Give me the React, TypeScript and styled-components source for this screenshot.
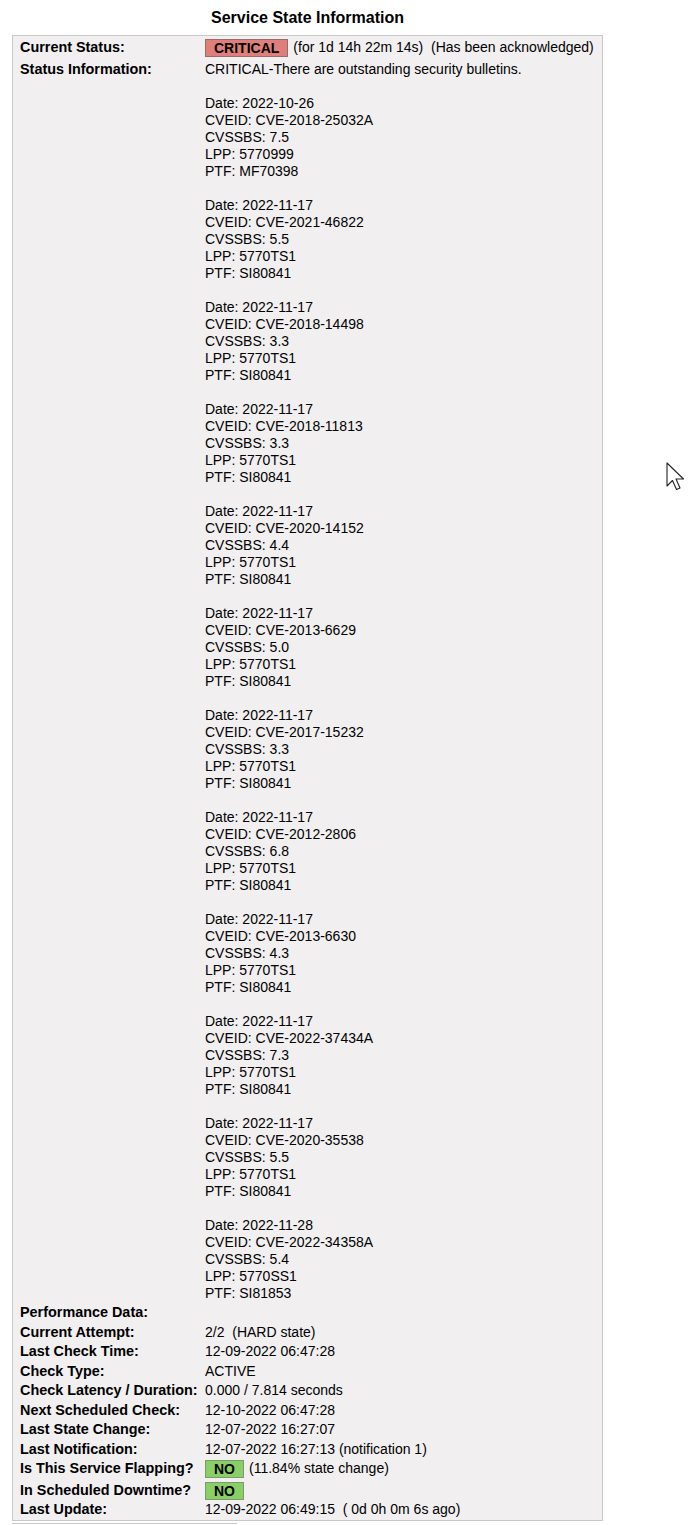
import React from 'react';
import styled, { createGlobalStyle } from 'styled-components';

const GlobalStyle = createGlobalStyle`
  body {
    margin: 0;
    background: #fff;
    font-family: 'Liberation Sans', Arial, sans-serif;
    color: #000;
  }
`;

interface Bulletin {
  date: string;
  cve: string;
  score: string;
  lpp: string;
  ptf: string;
}

const bulletins: Bulletin[] = [
  { date: '2022-10-26', cve: 'CVE-2018-25032A', score: '7.5', lpp: '5770999', ptf: 'MF70398' },
  { date: '2022-11-17', cve: 'CVE-2021-46822', score: '5.5', lpp: '5770TS1', ptf: 'SI80841' },
  { date: '2022-11-17', cve: 'CVE-2018-14498', score: '3.3', lpp: '5770TS1', ptf: 'SI80841' },
  { date: '2022-11-17', cve: 'CVE-2018-11813', score: '3.3', lpp: '5770TS1', ptf: 'SI80841' },
  { date: '2022-11-17', cve: 'CVE-2020-14152', score: '4.4', lpp: '5770TS1', ptf: 'SI80841' },
  { date: '2022-11-17', cve: 'CVE-2013-6629', score: '5.0', lpp: '5770TS1', ptf: 'SI80841' },
  { date: '2022-11-17', cve: 'CVE-2017-15232', score: '3.3', lpp: '5770TS1', ptf: 'SI80841' },
  { date: '2022-11-17', cve: 'CVE-2012-2806', score: '6.8', lpp: '5770TS1', ptf: 'SI80841' },
  { date: '2022-11-17', cve: 'CVE-2013-6630', score: '4.3', lpp: '5770TS1', ptf: 'SI80841' },
  { date: '2022-11-17', cve: 'CVE-2022-37434A', score: '7.3', lpp: '5770TS1', ptf: 'SI80841' },
  { date: '2022-11-17', cve: 'CVE-2020-35538', score: '5.5', lpp: '5770TS1', ptf: 'SI80841' },
  { date: '2022-11-28', cve: 'CVE-2022-34358A', score: '5.4', lpp: '5770SS1', ptf: 'SI81853' },
];

const plainRows: [string, string][] = [
  ['Performance Data:', ''],
  ['Current Attempt:', '2/2\u00a0\u00a0(HARD state)'],
  ['Last Check Time:', '12-09-2022 06:47:28'],
  ['Check Type:', 'ACTIVE'],
  ['Check Latency / Duration:', '0.000\u00a0/\u00a07.814 seconds'],
  ['Next Scheduled Check:', '12-10-2022 06:47:28'],
  ['Last State Change:', '12-07-2022 16:27:07'],
  ['Last Notification:', '12-07-2022 16:27:13 (notification 1)'],
];

export default function App() {
  return (
    <>
      <GlobalStyle />
      <Page>
        <Section>
          <Title>Service State Information</Title>
          <InfoBox>
            <Row $pad="3px 0 2px">
              <Label>Current Status:</Label>
              <Value>
                <Badge $state="critical">CRITICAL</Badge>
                <Note>(for 1d 14h 22m 14s)&nbsp;&nbsp;(Has been acknowledged)</Note>
              </Value>
            </Row>
            <Row $pad="2px 0 1px">
              <Label $lh={17}>Status Information:</Label>
              <StatusText>
                <Line>CRITICAL-There are outstanding security bulletins.</Line>
                {bulletins.map((b, i) => (
                  <React.Fragment key={i}>
                    <Line>&nbsp;</Line>
                    <Line>Date: {b.date}</Line>
                    <Line>CVEID: {b.cve}</Line>
                    <Line>CVSSBS: {b.score}</Line>
                    <Line>LPP: {b.lpp}</Line>
                    <Line>PTF: {b.ptf}</Line>
                  </React.Fragment>
                ))}
              </StatusText>
            </Row>
            {plainRows.map(([label, value]) => (
              <Row key={label}>
                <Label>{label}</Label>
                <Value>{value}</Value>
              </Row>
            ))}
            <Row $pad="1px 0 2px">
              <Label>Is This Service Flapping?</Label>
              <Value>
                <Badge $state="ok">NO</Badge>
                <Note>(11.84% state change)</Note>
              </Value>
            </Row>
            <Row $pad="2px 0 1px">
              <Label>In Scheduled Downtime?</Label>
              <Value>
                <Badge $state="ok">NO</Badge>
              </Value>
            </Row>
            <Row $pad="1px 0 2px">
              <Label>Last Update:</Label>
              <Value>12-09-2022 06:49:15&nbsp;&nbsp;( 0d 0h 0m 6s ago)</Value>
            </Row>
          </InfoBox>
          <NextBox />
        </Section>
        <Cursor width="20" height="30" viewBox="0 0 20 30">
          <path
            d="M1 1 L1 24 L6.5 18.5 L10.5 27.5 L14 26 L10 17 L17.5 17 Z"
            fill="#fff"
            stroke="#222"
            strokeWidth="1.1"
            strokeLinejoin="round"
          />
        </Cursor>
      </Page>
    </>
  );
}

const Page = styled.div`
  position: relative;
  min-height: 1525px;
  padding: 8px 0 0 12px;
  box-sizing: border-box;
`;

const Section = styled.div`
  width: 591px;
`;

const Title = styled.div`
  text-align: center;
  font-size: 16px;
  font-weight: bold;
  line-height: 19px;
  margin-bottom: 8px;
`;

const InfoBox = styled.div`
  background: #f1eff0;
  border: 1px solid #c9c9c9;
  padding: 0 0 0 7px;
  font-size: 14px;
`;

const Row = styled.div<{ $pad?: string }>`
  display: grid;
  grid-template-columns: 185px 1fr;
  align-items: center;
  padding: ${(p) => p.$pad || '2px 0'};
`;

const Label = styled.div<{ $lh?: number }>`
  align-self: ${(p) => (p.$lh ? 'start' : 'center')};
  font-weight: bold;
  font-size: 14.4px;
  line-height: ${(p) => p.$lh || 15.5}px;
  white-space: nowrap;
`;

const Value = styled.div`
  display: flex;
  align-items: center;
  line-height: 15.5px;
  white-space: pre;
`;

const StatusText = styled.div`
  line-height: 17px;
`;

const Line = styled.div`
  white-space: nowrap;
`;

const Badge = styled.span<{ $state: 'critical' | 'ok' }>`
  display: inline-block;
  font-weight: bold;
  line-height: 16px;
  padding: 0 8px;
  border: 1px solid ${(p) => (p.$state === 'critical' ? '#9a6b6b' : '#7d9a6b')};
  background: ${(p) => (p.$state === 'critical' ? '#e07f7a' : '#88d066')};
  color: #000;
`;

const Note = styled.span`
  margin-left: 5px;
`;

const NextBox = styled.div`
  margin-top: 2px;
  width: 225px;
  height: 1px;
  border-top: 1px solid #c9c9c9;
`;

const Cursor = styled.svg`
  position: absolute;
  left: 666px;
  top: 462px;
`;
